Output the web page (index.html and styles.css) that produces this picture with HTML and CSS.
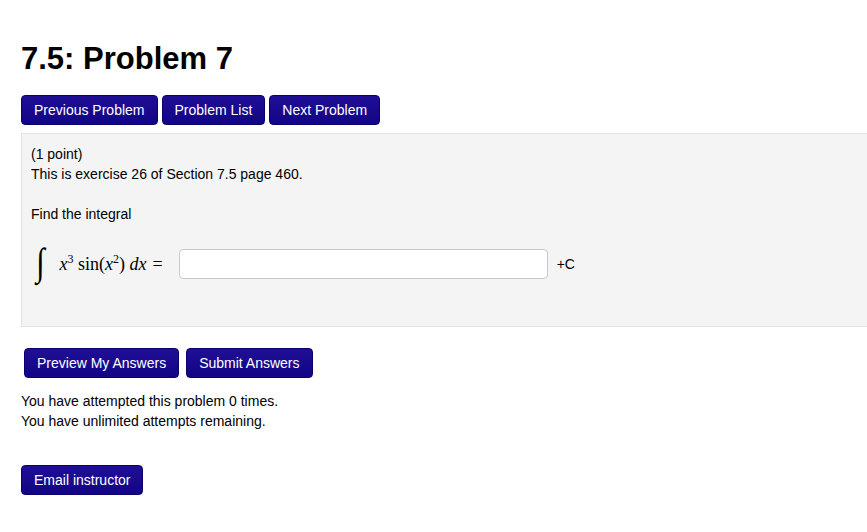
FILE: index.html
```html
<!DOCTYPE html>
<html lang="en">
<head>
    <meta charset="UTF-8">
    <title>7.5: Problem 7</title>
    <link rel="stylesheet" href="styles.css">
</head>
<body>
    <div class="page">
        <h1>7.5: Problem 7</h1>

        <div class="nav-buttons">
            <button class="btn">Previous Problem</button>
            <button class="btn">Problem List</button>
            <button class="btn">Next Problem</button>
        </div>

        <div class="problem">
            <p>(1 point)<br>This is exercise 26 of Section 7.5 page 460.</p>
            <p>Find the integral</p>
            <div class="math-row">
                <span class="int">&int;</span>
                <span class="math"><i>x</i><sup>3</sup> sin(<i>x</i><sup>2</sup>) <i>dx</i><span class="eq">=</span></span>
                <input type="text" class="answer">
                <span class="plus-c">+C</span>
            </div>
        </div>

        <div class="submit-buttons">
            <button class="btn">Preview My Answers</button>
            <button class="btn">Submit Answers</button>
        </div>

        <p class="attempts">You have attempted this problem 0 times.<br>You have unlimited attempts remaining.</p>

        <button class="btn email-btn">Email instructor</button>
    </div>
</body>
</html>
```

FILE: styles.css
```css
body {
    margin: 0;
    padding: 0;
    font-family: 'Liberation Sans', Arial, sans-serif;
    font-size: 14px;
    line-height: 20px;
    color: #000;
    background: #fff;
    overflow: hidden;
}
.page {
    padding: 41px 0 0 21px;
}
h1 {
    margin: 0;
    font-size: 31px;
    line-height: 36px;
    font-weight: bold;
}
.btn {
    font-family: 'Liberation Sans', Arial, sans-serif;
    font-size: 14px;
    height: 30px;
    padding: 0 12px;
    color: #fff;
    background: linear-gradient(#1f0f95, #120486);
    border: 1px solid #0b0068;
    border-radius: 4px;
    cursor: pointer;
}
.nav-buttons {
    display: flex;
    gap: 4px;
    margin-top: 18px;
}
.problem {
    margin-top: 8px;
    margin-right: -40px;
    padding: 10px 9px 42px;
    background: #f4f4f4;
    border: 1px solid #e2e2e2;
}
.problem p {
    margin: 0 0 20px;
}
.math-row {
    display: flex;
    align-items: center;
    height: 40px;
}
.math {
    font-family: 'Liberation Serif', 'Times New Roman', serif;
    font-size: 18px;
    white-space: nowrap;
}
.math sup {
    font-size: 12px;
    line-height: 0;
    vertical-align: 7px;
}
.eq {
    margin-left: 6px;
}
.int {
    font-family: 'Liberation Serif', 'Times New Roman', serif;
    font-size: 31px;
    font-style: italic;
    display: inline-block;
    transform: scaleY(1.25);
    margin: -4px 15px 0 5px;
}
.answer {
    width: 369px;
    height: 30px;
    box-sizing: border-box;
    margin-left: 16px;
    border: 1px solid #c8c8c8;
    border-radius: 4px;
    background: #fff;
}
.plus-c {
    margin-left: 9px;
}
.submit-buttons {
    display: flex;
    gap: 7px;
    margin: 21px 0 0 3px;
}
.attempts {
    margin: 13px 0 34px;
}
```
